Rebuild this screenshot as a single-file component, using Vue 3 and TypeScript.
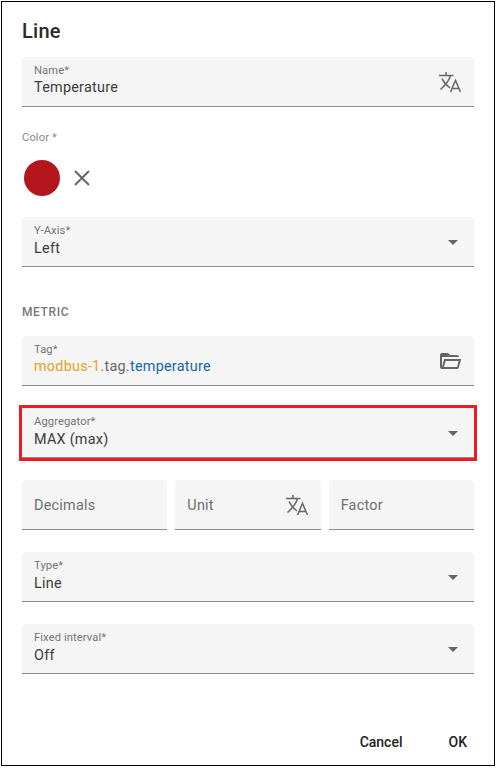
<script setup lang="ts">
const arrow = 'M7 10l5 5 5-5z'
const selectsTop = [{ label: 'Y-Axis*', value: 'Left' }]
const selectsBottom = [
  { label: 'Type*', value: 'Line' },
  { label: 'Fixed interval*', value: 'Off' },
]
</script>

<template>
  <div class="frame">
    <h1 class="title">Line</h1>

    <div class="field">
      <div class="text"><span class="label">Name*</span><span class="value">Temperature</span></div>
      <svg class="icon translate" viewBox="0 0 24 24" fill="none" stroke="#666" stroke-width="1.5">
        <path d="M1 5.5h14.5M8 2v3.5M12.5 5.5C11 11 7 15.5 2.5 19.5M4 8.5c2 4.5 4.5 7 8 9.5" />
        <path d="M12.5 22 17.5 10.5l5 11.5M14.2 18.5h6.6" />
      </svg>
    </div>

    <div class="color-label">Color *</div>
    <div class="color-row">
      <span class="swatch"></span>
      <svg class="clear" viewBox="0 0 24 24" fill="none" stroke="#666" stroke-width="2"><path d="M5 5l14 14M19 5 5 19" /></svg>
    </div>

    <div v-for="s in selectsTop" :key="s.label" class="field select">
      <div class="text"><span class="label">{{ s.label }}</span><span class="value">{{ s.value }}</span></div>
      <svg class="arrow" viewBox="0 0 24 24"><path :d="arrow" fill="#666" /></svg>
    </div>

    <div class="section">METRIC</div>

    <div class="field tag">
      <div class="text">
        <span class="label">Tag*</span>
        <span class="value"><span class="orange">modbus-1</span><span class="dim">.tag.</span><span class="blue">temperature</span></span>
      </div>
      <svg class="icon folder" viewBox="0 0 24 24"><path fill="#666" d="M6.1 10 4 18V8h17a2 2 0 0 0-2-2h-7l-2-2H4a2 2 0 0 0-2 2v12a2 2 0 0 0 2 2h15c.9 0 1.7-.6 1.9-1.5l2.3-8.5H6.1M19 18H6l1.6-6h13L19 18Z" /></svg>
    </div>

    <div class="highlight">
      <div class="field select">
        <div class="text"><span class="label">Aggregator*</span><span class="value">MAX (max)</span></div>
        <svg class="arrow" viewBox="0 0 24 24"><path :d="arrow" fill="#666" /></svg>
      </div>
    </div>

    <div class="triple">
      <div class="field small"><span class="placeholder">Decimals</span></div>
      <div class="field small">
        <span class="placeholder">Unit</span>
        <svg class="icon translate" viewBox="0 0 24 24" fill="none" stroke="#666" stroke-width="1.5">
          <path d="M1 5.5h14.5M8 2v3.5M12.5 5.5C11 11 7 15.5 2.5 19.5M4 8.5c2 4.5 4.5 7 8 9.5" />
          <path d="M12.5 22 17.5 10.5l5 11.5M14.2 18.5h6.6" />
        </svg>
      </div>
      <div class="field small"><span class="placeholder">Factor</span></div>
    </div>

    <div class="stack">
      <div v-for="s in selectsBottom" :key="s.label" class="field select">
        <div class="text"><span class="label">{{ s.label }}</span><span class="value">{{ s.value }}</span></div>
        <svg class="arrow" viewBox="0 0 24 24"><path :d="arrow" fill="#666" /></svg>
      </div>
    </div>

    <div class="actions">
      <button class="btn cancel">Cancel</button>
      <button class="btn ok">OK</button>
    </div>
  </div>
</template>

<style>
html, body { background: #fff; }
</style>

<style scoped>
.frame {
  box-sizing: border-box;
  width: 494px;
  height: 765px;
  margin: 1px 0 0 1px;
  padding: 0 20px;
  border: 1px solid #000;
  background: #fff;
  display: flex;
  flex-direction: column;
  font-family: Roboto, sans-serif;
  color: #222;
}
.title {
  margin: 0;
  height: 55px;
  padding-top: 16px;
  box-sizing: border-box;
  font-size: 20px;
  line-height: 26px;
  font-weight: 500;
  letter-spacing: 0.25px;
  color: #2a2a2a;
}
.field {
  box-sizing: border-box;
  height: 50px;
  background: #f5f5f5;
  border-bottom: 1px solid #8c8c8c;
  border-radius: 4px 4px 0 0;
  padding: 0 12px;
  display: flex;
  align-items: center;
  justify-content: space-between;
}
.text { display: flex; flex-direction: column; padding-bottom: 1px; }
.label {
  font-size: 11.2px;
  line-height: 14px;
  color: #757575;
  letter-spacing: 0.1px;
}
.value {
  font-size: 14.4px;
  line-height: 20px;
  color: #3c3c3c;
  letter-spacing: 0.25px;
}
.select .value { margin: 1px 0 -1px; }
.dim { color: #666; }
.icon { width: 24px; height: 24px; flex: none; margin-right: 0; }
.arrow { width: 24px; height: 24px; margin-right: -3px; flex: none; }
.color-label {
  margin-top: 23px;
  font-size: 11.2px;
  line-height: 16px;
  color: #8a8a8a;
  letter-spacing: 0.1px;
}
.color-row {
  height: 36px;
  margin-top: 14px;
  padding-left: 2px;
  display: flex;
  align-items: center;
  gap: 10px;
}
.swatch { width: 36px; height: 36px; border-radius: 50%; background: #b5161e; }
.clear { width: 24px; height: 24px; }
.color-row + .field { margin-top: 21px; }
.section {
  margin-top: 37px;
  font-size: 12px;
  line-height: 16px;
  font-weight: 500;
  letter-spacing: 0.6px;
  color: #777;
}
.tag { margin-top: 16px; }
.orange { color: #e8a317; }
.blue { color: #1565a8; }
.highlight {
  margin: 19px -3px 0;
  border: 3px solid #ed1c24;
}
.triple {
  margin-top: 19px;
  display: grid;
  grid-template-columns: repeat(3, 1fr);
  gap: 8px;
}
.placeholder {
  padding-top: 2px;
  font-size: 14.4px;
  color: #6f6f6f;
  letter-spacing: 0.25px;
}
.stack {
  margin-top: 22px;
  display: flex;
  flex-direction: column;
  gap: 22px;
}
.actions {
  margin-top: auto;
  height: 41px;
  margin-right: -20px;
  padding-right: 19px;
  display: flex;
  justify-content: flex-end;
  align-items: flex-start;
}
.btn {
  background: none;
  border: 0;
  font-family: inherit;
  font-size: 14px;
  font-weight: 500;
  color: #222;
  height: 36px;
  padding: 0 8px;
}
.cancel { margin-right: 30px; }
</style>
